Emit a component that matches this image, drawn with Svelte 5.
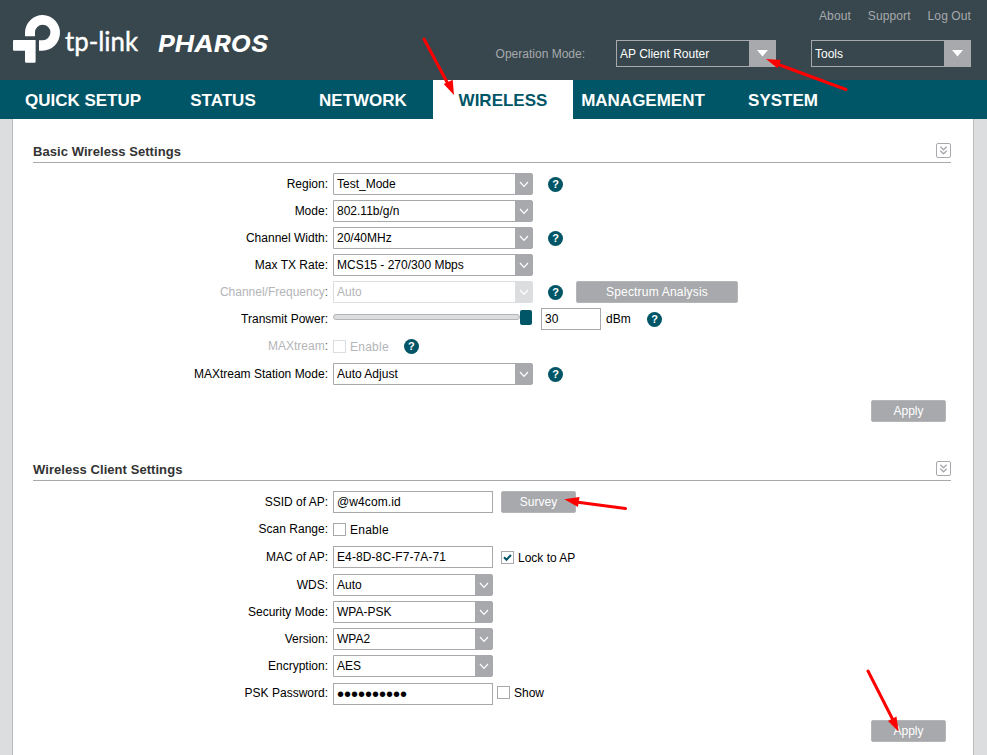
<script lang="ts">
	interface Field {
		label: string;
		kind: 'select' | 'text' | 'password' | 'check' | 'slider';
		value?: string;
		disabled?: boolean;
		help?: boolean;
		button?: string;
		check?: string;
		checked?: boolean;
		tall?: boolean;
	}

	interface Section {
		id: string;
		title: string;
		fields: Field[];
	}

	const links = ['About', 'Support', 'Log Out'];
	const tabs = ['QUICK SETUP', 'STATUS', 'NETWORK', 'WIRELESS', 'MANAGEMENT', 'SYSTEM'];
	let activeTab = $state('WIRELESS');
	let power = $state(30);

	const sections: Section[] = [
		{
			id: 'basic',
			title: 'Basic Wireless Settings',
			fields: [
				{ label: 'Region', kind: 'select', value: 'Test_Mode', help: true },
				{ label: 'Mode', kind: 'select', value: '802.11b/g/n' },
				{ label: 'Channel Width', kind: 'select', value: '20/40MHz', help: true },
				{ label: 'Max TX Rate', kind: 'select', value: 'MCS15 - 270/300 Mbps' },
				{
					label: 'Channel/Frequency',
					kind: 'select',
					value: 'Auto',
					disabled: true,
					help: true,
					button: 'Spectrum Analysis'
				},
				{ label: 'Transmit Power', kind: 'slider', help: true },
				{ label: 'MAXtream', kind: 'check', value: 'Enable', disabled: true, help: true, tall: true },
				{ label: 'MAXtream Station Mode', kind: 'select', value: 'Auto Adjust', help: true }
			]
		},
		{
			id: 'client',
			title: 'Wireless Client Settings',
			fields: [
				{ label: 'SSID of AP', kind: 'text', value: '@w4com.id', button: 'Survey' },
				{ label: 'Scan Range', kind: 'check', value: 'Enable', tall: true },
				{
					label: 'MAC of AP',
					kind: 'text',
					value: 'E4-8D-8C-F7-7A-71',
					check: 'Lock to AP',
					checked: true,
					tall: true
				},
				{ label: 'WDS', kind: 'select', value: 'Auto' },
				{ label: 'Security Mode', kind: 'select', value: 'WPA-PSK' },
				{ label: 'Version', kind: 'select', value: 'WPA2' },
				{ label: 'Encryption', kind: 'select', value: 'AES' },
				{ label: 'PSK Password', kind: 'password', value: 'w4compass1', check: 'Show' }
			]
		}
	];
</script>

{#snippet checkbox(text: string, checked: boolean)}
	<label class="check">
		<span class="box">
			{#if checked}
				<svg width="11" height="11" viewBox="0 0 11 11">
					<path d="M2 5.2 4.5 7.7 9 3" fill="none" stroke="#005566" stroke-width="2" />
				</svg>
			{/if}
		</span>
		<span>{text}</span>
	</label>
{/snippet}

{#snippet headerSelect(text: string)}
	<div class="header-select">
		<span>{text}</span>
		<i><svg width="11" height="7" viewBox="0 0 11 7"><path d="M0 0h11L5.5 6.5z" fill="#fff" /></svg></i>
	</div>
{/snippet}

<div class="page">
	<header>
		<svg class="logo" width="280" height="80" viewBox="0 0 280 80">
			<g fill="#fff">
				<path d="M25 36.3V32.2A17.5 17.8 0 1 1 42.5 50.7H39V40.3H42.6A7.7 7.8 0 1 0 35 32.5V36.3Z" />
				<path d="M14 40H35.6V61.5Q35.6 62.7 34.4 62.7H26.2Q25 62.7 25 61.5V50.7H14Q13 50.7 13 49.7V41Q13 40 14 40Z" />
			</g>
			<text class="brand" x="65" y="51" textLength="73" lengthAdjust="spacingAndGlyphs">tp-link</text>
			<text class="product" x="158" y="51.5" textLength="110" lengthAdjust="spacingAndGlyphs">PHAROS</text>
		</svg>
		<div class="tools">
			<nav class="links">
				{#each links as link}
					<span>{link}</span>
				{/each}
			</nav>
			<div class="modes">
				<span class="mode-label">Operation Mode:</span>
				{@render headerSelect('AP Client Router')}
				{@render headerSelect('Tools')}
			</div>
		</div>
	</header>

	<nav class="tabs">
		{#each tabs as tab}
			<button class="tab" class:active={tab === activeTab} onclick={() => (activeTab = tab)}>{tab}</button>
		{/each}
	</nav>

	<main>
		{#each sections as section}
			<section class={section.id}>
				<h2>
					{section.title}
					<svg width="15" height="15" viewBox="0 0 15 15" fill="none" stroke="#a7a9ac">
						<rect x=".5" y=".5" width="14" height="14" rx="1.5" />
						<path d="M4.3 3.7 7.5 6.7 10.7 3.7M4.3 7.7 7.5 10.7 10.7 7.7" stroke-width="1.4" />
					</svg>
				</h2>
				<div class="fields">
					{#each section.fields as field}
						<div class="row row-{field.kind}" class:disabled={field.disabled} class:tall={field.tall}>
							<span class="label">{field.label}<b>:</b></span>
							{#if field.kind === 'select'}
								<div class="select">
									<span>{field.value}</span>
									<i>
										<svg width="10" height="7" viewBox="0 0 10 7">
											<path d="M1 1 5 5.4 9 1" fill="none" stroke="#fff" stroke-width="1.2" />
										</svg>
									</i>
								</div>
							{:else if field.kind === 'slider'}
								<div class="slider">
									<div class="track"></div>
									<div class="thumb"></div>
								</div>
								<input class="power" bind:value={power} aria-label="Transmit Power" />
								<span class="unit">dBm</span>
							{:else if field.kind === 'check'}
								{@render checkbox(field.value ?? '', false)}
							{:else}
								<input type={field.kind} value={field.value} aria-label={field.label} />
							{/if}
							{#if field.help}
								<span class="help">?</span>
							{/if}
							{#if field.button}
								<button class="btn">{field.button}</button>
							{/if}
							{#if field.check}
								{@render checkbox(field.check, field.checked ?? false)}
							{/if}
						</div>
					{/each}
				</div>
				<button class="btn apply">Apply</button>
			</section>
		{/each}
	</main>

	<svg class="arrows" width="987" height="755" viewBox="0 0 987 755">
		<g stroke="#f00" stroke-width="3" stroke-linecap="round">
			<path d="M424 39 448 84M846 89.5 777 64M625.5 508.5 576 502M868 671 893 720" />
		</g>
		<g fill="#f00">
			<path d="M454 95 443.7 84 452.7 79.7Z" />
			<path d="M766 59 781 60 777.5 68.3Z" />
			<path d="M564.3 499.3 579.5 497 578 507Z" />
			<path d="M898.5 731.5 888 721 896.5 716.5Z" />
		</g>
	</svg>
</div>

<style>
	:global(body) {
		margin: 0;
		overflow: hidden;
	}

	.page {
		position: relative;
		display: flex;
		flex-direction: column;
		height: 755px;
		background: #dcdddf;
		font-family: 'Liberation Sans', Arial, sans-serif;
		font-size: 12px;
		color: #000;
		overflow: hidden;
	}

	header {
		display: flex;
		justify-content: space-between;
		height: 80px;
		background: #37474d;
		color: #a7a9ac;
	}

	.brand {
		font-family: Lato, sans-serif;
		font-size: 26px;
		fill: #fff;
		stroke: #fff;
		stroke-width: 0.4px;
	}

	.product {
		font-family: Inter, sans-serif;
		font-size: 23.5px;
		font-weight: 700;
		font-style: italic;
		fill: #fff;
	}

	.tools {
		display: flex;
		flex-direction: column;
		align-items: flex-end;
		padding: 9px 16px 0 0;
	}

	.links {
		display: flex;
		gap: 17px;
		letter-spacing: 0.1px;
		line-height: 14px;
	}

	.modes {
		display: flex;
		align-items: center;
		margin-top: 17px;
	}

	.mode-label {
		margin-right: 31px;
	}

	.header-select {
		display: flex;
		box-sizing: border-box;
		width: 160px;
		height: 27px;
		border: 1px solid #a7a9ac;
		color: #fff;
		line-height: 27px;
	}

	.header-select + .header-select {
		margin-left: 35px;
	}

	.header-select span {
		flex: 1;
		padding-left: 3px;
	}

	.header-select i {
		display: flex;
		align-items: center;
		justify-content: center;
		width: 26px;
		background: #a7a9ac;
	}

	.tabs {
		display: flex;
		height: 39px;
		padding-left: 13px;
		background: #005566;
	}

	.tab {
		width: 140px;
		padding: 2px 0 0;
		border: none;
		background: none;
		color: #fff;
		font: bold 17px/37px 'Liberation Sans', Arial, sans-serif;
		text-align: center;
	}

	.tab.active {
		background: #fff;
		color: #005566;
	}

	main {
		flex: 1;
		box-sizing: border-box;
		width: 962px;
		margin-left: 12px;
		padding: 21px 22px 0 20px;
		border: solid #b9babc;
		border-width: 0 1px;
		background: #fff;
	}

	section {
		display: flex;
		flex-direction: column;
	}

	section.client {
		margin-top: 36px;
	}

	h2 {
		display: flex;
		justify-content: space-between;
		box-sizing: border-box;
		height: 23px;
		margin: 0;
		padding-top: 3px;
		border-bottom: 1px solid #a7a9ac;
		color: #333;
		font-size: 13px;
		letter-spacing: 0.06px;
		line-height: 18px;
	}

	.fields {
		display: flex;
		flex-direction: column;
		gap: 5px;
		margin-top: 10px;
	}

	.row {
		display: flex;
		height: 22px;
		line-height: 22px;
	}

	.row.tall {
		height: 23px;
	}

	.row-password {
		margin-top: 1px;
	}

	.label {
		width: 295px;
		margin-right: 5px;
		text-align: right;
	}

	.label b {
		font-weight: normal;
	}

	.row-password .label {
		line-height: 20px;
	}

	.disabled,
	.disabled .label {
		color: #b4b5b7;
	}

	.disabled .label b {
		color: #555;
	}

	.select {
		display: flex;
		box-sizing: border-box;
		width: 200px;
		height: 22px;
		border: 1px solid #a7a9ac;
		border-radius: 0 2px 2px 0;
		line-height: 20px;
	}

	.client .select {
		width: 160px;
	}

	.select span {
		flex: 1;
		padding-left: 3px;
	}

	.select i {
		display: flex;
		align-items: center;
		justify-content: center;
		width: 17px;
		background: #a7a9ac;
	}

	.disabled .select {
		border-color: #dcdddf;
	}

	.disabled .select i {
		background: #dcdddf;
	}

	input {
		box-sizing: border-box;
		width: 160px;
		height: 22px;
		margin: 0;
		padding: 0 3px;
		border: 1px solid #a7a9ac;
		background: #fff;
		color: #000;
		font: 12px 'Liberation Sans', Arial, sans-serif;
		letter-spacing: 0.1px;
	}

	input[type='password'] {
		font-size: 20px;
		letter-spacing: 0;
	}

	input.power {
		width: 60px;
		margin-left: 8px;
	}

	.unit {
		width: 26px;
		margin-left: 5px;
	}

	.slider {
		display: flex;
		align-items: center;
		width: 200px;
		height: 17px;
	}

	.track {
		box-sizing: border-box;
		flex: 1;
		height: 6px;
		margin-top: 1px;
		border: 1px solid #b4b5b7;
		border-radius: 3px;
		background: #dcdddf;
	}

	.thumb {
		width: 12px;
		height: 15px;
		margin: 1px 1px 0 0;
		border-radius: 2px;
		background: #005566;
	}

	.help {
		width: 15px;
		height: 15px;
		margin: 4px 0 0 15px;
		border-radius: 50%;
		background: #005566;
		color: #fff;
		font-size: 11px;
		font-weight: bold;
		line-height: 15px;
		text-align: center;
	}

	.check {
		display: flex;
		gap: 4px;
		margin-top: 1px;
	}

	.row-check .check {
		letter-spacing: 0.25px;
	}

	.box {
		box-sizing: border-box;
		width: 13px;
		height: 13px;
		margin-top: 4px;
		border: 1px solid #a7a9ac;
		line-height: 0;
	}

	.disabled .box {
		border-color: #dcdddf;
	}

	.row-text .check {
		margin-left: 8px;
	}

	.row-password .check {
		margin: -1px 0 0 4px;
	}

	.btn {
		height: 22px;
		padding: 0;
		border: 1px solid #b4b5b7;
		border-radius: 2px;
		background: #a7a9ac;
		color: #fff;
		font: 12px 'Liberation Sans', Arial, sans-serif;
	}

	.row .btn {
		width: 75px;
		margin-left: 8px;
	}

	.row.disabled .btn {
		width: 162px;
		margin-left: 13px;
		letter-spacing: 0.2px;
	}

	.apply {
		align-self: flex-end;
		width: 75px;
		margin: 15px 5px 0 0;
	}

	.arrows {
		position: absolute;
		top: 0;
		left: 0;
		pointer-events: none;
	}
</style>
